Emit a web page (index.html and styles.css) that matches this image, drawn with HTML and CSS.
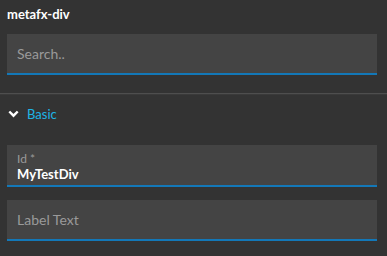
FILE: index.html
```html
<!DOCTYPE html>
<html>
<head>
<meta charset="utf-8">
<link rel="stylesheet" href="styles.css">
</head>
<body>
<div class="panel">
  <div class="title">metafx-div</div>
  <div class="search-wrap">
    <div class="field single"><span class="placeholder">Search..</span></div>
  </div>
  <div class="sep"></div>
  <div class="section">
    <div class="section-head">
      <svg class="chev" width="11" height="8" viewBox="0 0 11 8"><path d="M1.3 1.5 L5.5 5.7 L9.7 1.5" fill="none" stroke="#ffffff" stroke-width="2.4"/></svg>
      <span class="section-title">Basic</span>
    </div>
    <div class="field double">
      <span class="label">Id *</span>
      <span class="value">MyTestDiv</span>
    </div>
    <div class="field single"><span class="placeholder">Label Text</span></div>
  </div>
</div>
</body>
</html>
```
FILE: styles.css
```css
html, body {
  margin: 0;
  padding: 0;
  background: #333333;
}
.panel {
  width: 387px;
  height: 256px;
  font-family: "Lato", "Open Sans", sans-serif;
  overflow: hidden;
}
.title {
  color: #ffffff;
  font-size: 13px;
  font-weight: 700;
  padding: 5px 0 0 7px;
  height: 34px;
  box-sizing: border-box;
  line-height: 18px;
}
.search-wrap {
  padding: 0 10px 0 7px;
  height: 59px;
}
.field {
  background: #444444;
  border-bottom: 2px solid #1378b8;
  box-sizing: border-box;
  padding: 0 10px;
  display: flex;
  flex-direction: column;
  justify-content: center;
}
.field.single {
  height: 41px;
}
.field.double {
  height: 42px;
  justify-content: flex-start;
  padding-top: 7px;
}
.placeholder {
  color: #9a9a9a;
  font-size: 14px;
  line-height: 18px;
}
.sep {
  height: 1px;
  background: #4e4e4e;
  border-bottom: 1px solid #3a3a3a;
}
.section {
  padding: 0 10px 0 7px;
}
.section-head {
  display: flex;
  align-items: center;
  height: 38px;
  padding-left: 1px;
}
.chev {
  display: block;
  margin-right: 8px;
}
.section-title {
  color: #1eb4e6;
  font-size: 13px;
  line-height: 16px;
}
.section .field.double {
  margin-top: 12px;
  margin-bottom: 13px;
}
.label {
  color: #9a9a9a;
  font-size: 12px;
  line-height: 14px;
}
.value {
  color: #ffffff;
  font-size: 13px;
  font-weight: 700;
  line-height: 17px;
}
```
